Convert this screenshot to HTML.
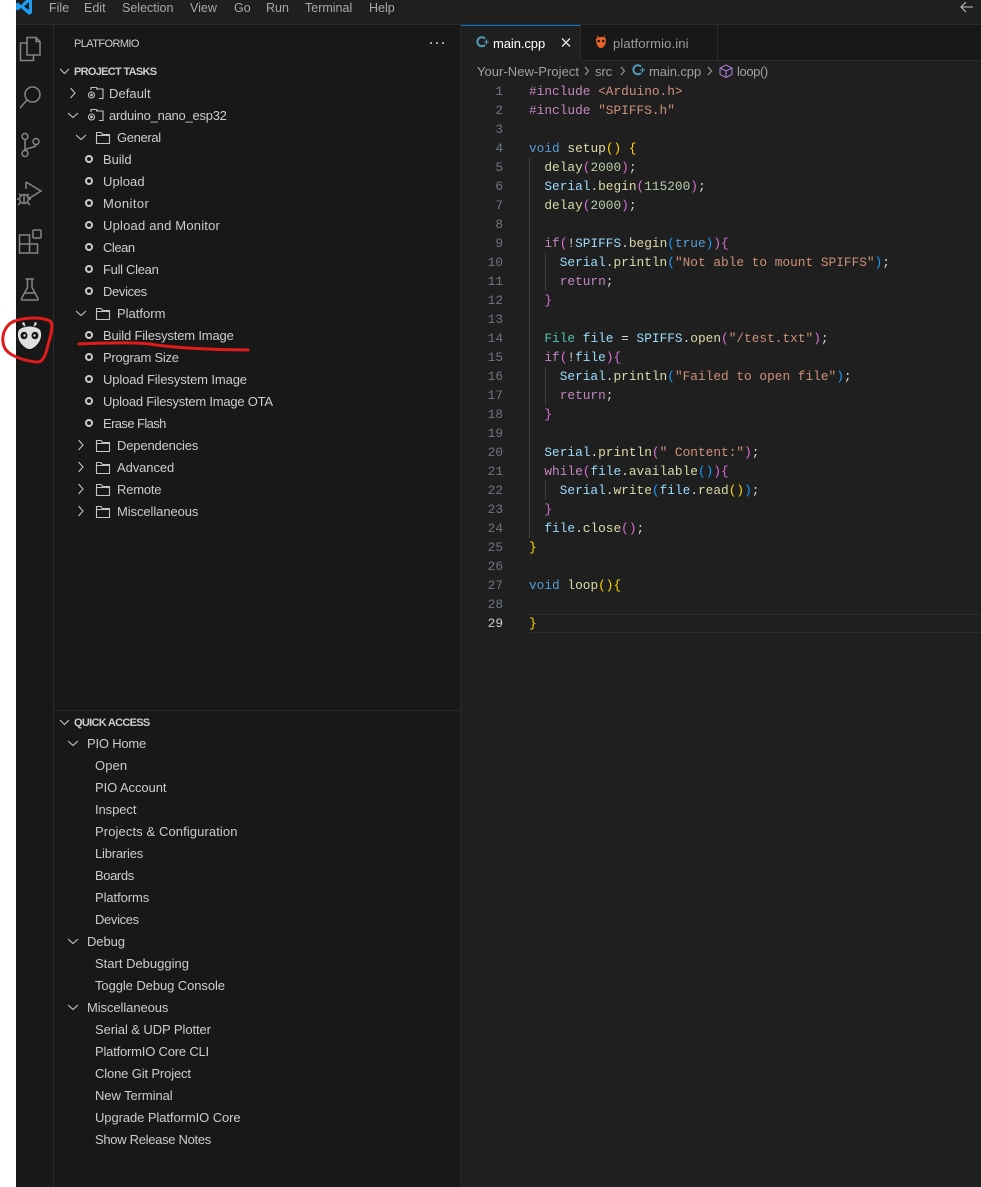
<!DOCTYPE html>
<html><head><meta charset="utf-8">
<style>
html,body{margin:0;padding:0;background:#fff}
#p{position:relative;width:981px;height:1187px;overflow:hidden;background:#fff;font-family:"Liberation Sans",sans-serif}
#p div{position:absolute}
.t{font-size:13px;line-height:22px;height:22px;color:#cccccc;white-space:pre;letter-spacing:-.08px;margin-top:1px}
.m{font-size:12.500px;line-height:16px;color:#a8a8a8;white-space:pre;top:0}
.b{font-size:11px;font-weight:bold;line-height:16px;color:#cccccc;white-space:pre;letter-spacing:-.7px;margin-top:1px}
.c{font-family:"Liberation Mono",monospace;font-size:12.8px;line-height:19px;height:19px;white-space:pre;left:529px;color:#d4d4d4}
.n{font-family:"Liberation Mono",monospace;font-size:12.8px;line-height:19px;height:19px;left:470px;width:33px;text-align:right;color:#6e7681}
.o{width:4px;height:4px;border:2px solid #cccccc;border-radius:50%;left:85px;box-sizing:content-box}
.g{width:1px;background:#404040}
i{font-style:normal}
.k{color:#c586c0}.s{color:#ce9178}.v{color:#569cd6}.f{color:#dcdcaa}.y{color:#ffd700}.q{color:#da70d6}.u{color:#179fff}.w{color:#9cdcfe}.e{color:#b5cea8}.l{color:#4ec9b0}
svg{position:absolute;overflow:visible}
</style></head><body><div id="p">

<div style="left:16px;top:0;width:965px;height:1187px;background:#181818"></div>
<div style="left:16px;top:0;width:965px;height:25px;background:#1f1f1f"></div>
<div style="left:16px;top:24px;width:965px;height:1px;background:#2b2b2b"></div>
<div style="left:53px;top:25px;width:1px;height:1162px;background:#2b2b2b"></div>
<div style="left:460px;top:25px;width:1px;height:1162px;background:#2b2b2b"></div>
<div style="left:461px;top:25px;width:520px;height:1162px;background:#1f1f1f"></div>
<div style="left:461px;top:25px;width:520px;height:36px;background:#181818"></div>

<svg style="left:0;top:0" width="981" height="25" viewBox="0 0 981 25">
<path d="M29 -3L32 -1V13L29 15L21 8L18 10.5L16 9.5V3.5L18 2.5L21 5Z" fill="#1f9cf0"/>
<path d="M29 2L24 6.500L29 10Z" fill="#1f1f1f"/>
<path d="M973 7H961M966 2L961 7L966 12" fill="none" stroke="#c0c0c0" stroke-width="1.100"/>
</svg>
<div class="m" style="left:49px">File</div>
<div class="m" style="left:84px">Edit</div>
<div class="m" style="left:122px">Selection</div>
<div class="m" style="left:190px">View</div>
<div class="m" style="left:234px">Go</div>
<div class="m" style="left:266px">Run</div>
<div class="m" style="left:305px">Terminal</div>
<div class="m" style="left:369px">Help</div>

<svg style="left:16px;top:25px" width="38" height="340" viewBox="16 25 38 340" fill="none" stroke="#858585" stroke-width="1.500">
<path d="M27 37.500H36L40 41.500V55H27ZM36 37.500V41.500H40"/>
<path d="M27 43H20.500V60.500H33.500V55"/>
<circle cx="32.500" cy="94.500" r="7.500"/><path d="M27 100L20 108"/>
<circle cx="25" cy="136.500" r="3"/><circle cx="25" cy="153.500" r="3"/><circle cx="36" cy="141.500" r="3"/>
<path d="M25 139.500V150.500M36 144.500C36 148 29 147 25.500 150"/>
<path d="M26 182V189M26 182L41 191L28 199"/>
<circle cx="24" cy="199" r="4.500"/><path d="M19 194L22 196M29 194L26 196M17 199H20M28 199H31M18 205L21 202M30 205L27 202M24 195V204"/>
<path d="M19.500 235H29.500V253H19.500ZM19.500 244H37.500V253H29.500"/>
<rect x="33" y="230" width="8" height="8" rx="1"/>
<path d="M25.500 279H34M27.500 279V287.500L21.500 298.500C21 299.500 21.500 300 22.500 300H37C38 300 38.500 299.500 38 298.500L32 287.500V279M24 293H35"/>
</svg>
<svg style="left:16px;top:320px" width="30" height="40" viewBox="16 320 30 40">
<path d="M19 330C21.500 327.500 26 326.500 29.500 326.500C33 326.500 37.500 327.500 40 330C41.500 333 41.500 337 39.500 341C37.500 345 33 349 29.500 349C26 349 21.500 345 19.500 341C17.500 337 17.500 333 19 330Z" fill="#e0e0e0"/>
<path d="M25 326L23.500 324M34 326L35.500 324" stroke="#e0e0e0" stroke-width="1.500"/>
<circle cx="23.500" cy="323.500" r="1.300" fill="#e0e0e0"/><circle cx="35.500" cy="323.500" r="1.300" fill="#e0e0e0"/>
<ellipse cx="24" cy="335.500" rx="3.500" ry="3.800" fill="#181818"/><ellipse cx="35" cy="335.500" rx="3.500" ry="3.800" fill="#181818"/>
<circle cx="24.500" cy="335.500" r="1.200" fill="#e0e0e0"/><circle cx="34.500" cy="335.500" r="1.200" fill="#e0e0e0"/>
</svg>

<div class="t" style="left:74px;top:32px;font-size:11px;color:#cccccc;letter-spacing:-.58px">PLATFORMIO</div>
<svg style="left:428px;top:40px" width="18" height="6"><circle cx="3" cy="3" r="1" fill="#ccc"/><circle cx="9" cy="3" r="1" fill="#ccc"/><circle cx="15" cy="3" r="1" fill="#ccc"/></svg>

<svg style="left:54px;top:60px" width="160" height="470" viewBox="54 60 160 470" fill="none" stroke="#c5c5c5" stroke-width="1.100">
<path d="M60 69L64.500 73.500L69 69"/>
<path d="M70.500 88L75 93L70.500 98"/>
<path d="M68 113L73 117.500L78 113"/>
<path d="M76 135L81 139.500L86 135"/>
<path d="M76 311L81 315.500L86 311"/>
<path d="M78.500 440L83 445L78.500 450"/><path d="M78.500 462L83 467L78.500 472"/><path d="M78.500 484L83 489L78.500 494"/><path d="M78.500 506L83 511L78.500 516"/>
<path d="M91 90V87.500H96.500L98 89H103V98.500H99M103 89H96"/><circle cx="91.500" cy="95" r="3"/><circle cx="91.500" cy="95" r=".8" fill="#c5c5c5"/>
<path d="M91 112V109.500H96.500L98 111H103V120.500H99M103 111H96"/><circle cx="91.500" cy="117" r="3"/><circle cx="91.500" cy="117" r=".8" fill="#c5c5c5"/>
<path d="M96.500 132.500H101L102.500 134.500H109.500V143.500H96.500ZM96.500 135.500H109.500"/>
<path d="M96.500 308.500H101L102.500 310.500H109.500V319.500H96.500ZM96.500 311.500H109.500"/>
<path d="M96.500 440.500H101L102.500 442.500H109.500V451.500H96.500ZM96.500 443.500H109.500"/>
<path d="M96.500 462.500H101L102.500 464.500H109.500V473.500H96.500ZM96.500 465.500H109.500"/>
<path d="M96.500 484.500H101L102.500 486.500H109.500V495.500H96.500ZM96.500 487.500H109.500"/>
<path d="M96.500 506.500H101L102.500 508.500H109.500V517.500H96.500ZM96.500 509.500H109.500"/>
</svg>

<div class="b" style="left:74px;top:63px">PROJECT TASKS</div>
<div class="t" style="left:109px;top:82px;letter-spacing:.06px">Default</div>
<div class="t" style="left:109px;top:104px;letter-spacing:-.25px">arduino_nano_esp32</div>
<div class="t" style="left:117px;top:126px;letter-spacing:-.36px">General</div>
<div class="o" style="top:155px"></div><div class="t" style="left:103px;top:148px">Build</div>
<div class="o" style="top:177px"></div><div class="t" style="left:103px;top:170px;letter-spacing:.08px">Upload</div>
<div class="o" style="top:199px"></div><div class="t" style="left:103px;top:192px;letter-spacing:.42px">Monitor</div>
<div class="o" style="top:221px"></div><div class="t" style="left:103px;top:214px;letter-spacing:.2px">Upload and Monitor</div>
<div class="o" style="top:243px"></div><div class="t" style="left:103px;top:236px;letter-spacing:-.48px">Clean</div>
<div class="o" style="top:265px"></div><div class="t" style="left:103px;top:258px;letter-spacing:-.3px">Full Clean</div>
<div class="o" style="top:287px"></div><div class="t" style="left:103px;top:280px;letter-spacing:-.35px">Devices</div>
<div class="t" style="left:117px;top:302px;letter-spacing:0">Platform</div>
<div class="o" style="top:331px"></div><div class="t" style="left:103px;top:324px;letter-spacing:-.17px">Build Filesystem Image</div>
<div class="o" style="top:353px"></div><div class="t" style="left:103px;top:346px;letter-spacing:-.25px">Program Size</div>
<div class="o" style="top:375px"></div><div class="t" style="left:103px;top:368px;letter-spacing:-.12px">Upload Filesystem Image</div>
<div class="o" style="top:397px"></div><div class="t" style="left:103px;top:390px;letter-spacing:-.23px">Upload Filesystem Image OTA</div>
<div class="o" style="top:419px"></div><div class="t" style="left:103px;top:412px;letter-spacing:-.6px">Erase Flash</div>
<div class="t" style="left:117px;top:434px;letter-spacing:-.16px">Dependencies</div>
<div class="t" style="left:117px;top:456px">Advanced</div>
<div class="t" style="left:117px;top:478px;letter-spacing:-.2px">Remote</div>
<div class="t" style="left:117px;top:500px">Miscellaneous</div>

<div style="left:54px;top:710px;width:406px;height:1px;background:#2b2b2b"></div>
<svg style="left:54px;top:710px" width="40" height="310" viewBox="54 710 40 310" fill="none" stroke="#c5c5c5" stroke-width="1.100">
<path d="M60 720L64.500 724.500L69 720"/>
<path d="M68 741L73 745.500L78 741"/>
<path d="M68 939L73 943.500L78 939"/>
<path d="M68 1005L73 1009.500L78 1005"/>
</svg>
<div class="b" style="left:74px;top:714px">QUICK ACCESS</div>
<div class="t" style="left:87px;top:732px;letter-spacing:-.2px">PIO Home</div>
<div class="t" style="left:95px;top:754px;letter-spacing:.1px">Open</div>
<div class="t" style="left:95px;top:776px">PIO Account</div>
<div class="t" style="left:95px;top:798px">Inspect</div>
<div class="t" style="left:95px;top:820px;letter-spacing:.1px">Projects &amp; Configuration</div>
<div class="t" style="left:95px;top:842px;letter-spacing:-.2px">Libraries</div>
<div class="t" style="left:95px;top:864px;letter-spacing:-.4px">Boards</div>
<div class="t" style="left:95px;top:886px">Platforms</div>
<div class="t" style="left:95px;top:908px;letter-spacing:-.35px">Devices</div>
<div class="t" style="left:87px;top:930px">Debug</div>
<div class="t" style="left:95px;top:952px;letter-spacing:0">Start Debugging</div>
<div class="t" style="left:95px;top:974px">Toggle Debug Console</div>
<div class="t" style="left:87px;top:996px">Miscellaneous</div>
<div class="t" style="left:95px;top:1018px">Serial &amp; UDP Plotter</div>
<div class="t" style="left:95px;top:1040px;letter-spacing:-.2px">PlatformIO Core CLI</div>
<div class="t" style="left:95px;top:1062px;letter-spacing:-.14px">Clone Git Project</div>
<div class="t" style="left:95px;top:1084px">New Terminal</div>
<div class="t" style="left:95px;top:1106px">Upgrade PlatformIO Core</div>
<div class="t" style="left:95px;top:1128px;letter-spacing:-.3px">Show Release Notes</div>

<div style="left:461px;top:25px;width:119px;height:36px;background:#1f1f1f"></div>
<div style="left:461px;top:25px;width:119px;height:1px;background:#0078d4"></div>
<div style="left:580px;top:25px;width:1px;height:36px;background:#2b2b2b"></div>
<div style="left:717px;top:25px;width:1px;height:36px;background:#2b2b2b"></div>
<div style="left:718px;top:60px;width:263px;height:1px;background:#2b2b2b"></div>
<div style="left:581px;top:60px;width:137px;height:1px;background:#2b2b2b"></div>
<div class="t" style="left:493px;top:32px;color:#ffffff">main.cpp</div>
<div class="t" style="left:613px;top:32px;color:#9d9d9d;letter-spacing:.14px">platformio.ini</div>
<svg style="left:461px;top:25px" width="260" height="60" viewBox="461 25 260 60" fill="none">
<path d="M562 38.500L570 46.500M570 38.500L562 46.500" stroke="#e8e8e8" stroke-width="1.300"/>
<path d="M485 38.500A4.500 4.500 0 1 0 485 45" stroke="#519aba" stroke-width="2"/>
<path d="M484 42H489M486.500 39.500V44.500" stroke="#519aba" stroke-width="1.100"/>
<path d="M641 66.500A4.500 4.500 0 1 0 641 73" stroke="#519aba" stroke-width="2"/>
<path d="M640 70H645M642.500 67.500V72.500" stroke="#519aba" stroke-width="1.100"/>
<path d="M596 40C596 37.500 598 37 601 37C604 37 606 37.500 606 40C606 44 604 48 601 48C598 48 596 44 596 40Z" fill="#e8622c"/>
<path d="M598 37L597 35.500M604 37L605 35.500" stroke="#e8622c"/>
<circle cx="598.700" cy="41" r="1.300" fill="#181818"/><circle cx="603.300" cy="41" r="1.300" fill="#181818"/>
</svg>
<svg style="left:461px;top:61px" width="320" height="20" viewBox="461 61 320 20" fill="none" stroke="#a0a0a0" stroke-width="1">
<path d="M585 67L588.500 71L585 75M621 67L624.500 71L621 75M708 67L711.500 71L708 75"/>
<path d="M726 65L732 68V74.500L726 77.500L720 74.500V68ZM720 68L726 71L732 68M726 71V77.500" stroke="#b180d7"/>
</svg>
<div class="t" style="left:477px;top:60px;color:#a0a0a0;letter-spacing:.04px">Your-New-Project</div>
<div class="t" style="left:595px;top:60px;color:#a0a0a0">src</div>
<div class="t" style="left:649px;top:60px;color:#a0a0a0">main.cpp</div>
<div class="t" style="left:737px;top:60px;color:#a0a0a0;letter-spacing:-.4px">loop()</div>

<div class="g" style="left:529px;top:158px;height:380px"></div>
<div class="g" style="left:545px;top:253px;height:38px"></div>
<div class="g" style="left:545px;top:367px;height:38px"></div>
<div class="g" style="left:545px;top:481px;height:19px"></div>
<div style="left:529px;top:614px;width:452px;height:17px;border-top:1px solid #2b2b2b;border-bottom:1px solid #2b2b2b;background:#1f1f1f"></div>

<div class="n" style="top:82px">1</div>
<div class="n" style="top:101px">2</div>
<div class="n" style="top:120px">3</div>
<div class="n" style="top:139px">4</div>
<div class="n" style="top:158px">5</div>
<div class="n" style="top:177px">6</div>
<div class="n" style="top:196px">7</div>
<div class="n" style="top:215px">8</div>
<div class="n" style="top:234px">9</div>
<div class="n" style="top:253px">10</div>
<div class="n" style="top:272px">11</div>
<div class="n" style="top:291px">12</div>
<div class="n" style="top:310px">13</div>
<div class="n" style="top:329px">14</div>
<div class="n" style="top:348px">15</div>
<div class="n" style="top:367px">16</div>
<div class="n" style="top:386px">17</div>
<div class="n" style="top:405px">18</div>
<div class="n" style="top:424px">19</div>
<div class="n" style="top:443px">20</div>
<div class="n" style="top:462px">21</div>
<div class="n" style="top:481px">22</div>
<div class="n" style="top:500px">23</div>
<div class="n" style="top:519px">24</div>
<div class="n" style="top:538px">25</div>
<div class="n" style="top:557px">26</div>
<div class="n" style="top:576px">27</div>
<div class="n" style="top:595px">28</div>
<div class="n" style="top:614px;color:#cccccc">29</div>

<div class="c" style="top:82px"><i class="k">#include </i><i class="s">&lt;Arduino.h&gt;</i></div>
<div class="c" style="top:101px"><i class="k">#include </i><i class="s">"SPIFFS.h"</i></div>
<div class="c" style="top:139px"><i class="v">void</i> <i class="f">setup</i><i class="y">()</i> <i class="y">{</i></div>
<div class="c" style="top:158px">  <i class="f">delay</i><i class="q">(</i><i class="e">2000</i><i class="q">)</i>;</div>
<div class="c" style="top:177px">  <i class="w">Serial</i>.<i class="f">begin</i><i class="q">(</i><i class="e">115200</i><i class="q">)</i>;</div>
<div class="c" style="top:196px">  <i class="f">delay</i><i class="q">(</i><i class="e">2000</i><i class="q">)</i>;</div>
<div class="c" style="top:234px">  <i class="k">if</i><i class="q">(</i>!<i class="w">SPIFFS</i>.<i class="f">begin</i><i class="u">(</i><i class="v">true</i><i class="u">)</i><i class="q">){</i></div>
<div class="c" style="top:253px">    <i class="w">Serial</i>.<i class="f">println</i><i class="u">(</i><i class="s">"Not able to mount SPIFFS"</i><i class="u">)</i>;</div>
<div class="c" style="top:272px">    <i class="k">return</i>;</div>
<div class="c" style="top:291px">  <i class="q">}</i></div>
<div class="c" style="top:329px">  <i class="l">File</i> <i class="w">file</i> = <i class="w">SPIFFS</i>.<i class="f">open</i><i class="q">(</i><i class="s">"/test.txt"</i><i class="q">)</i>;</div>
<div class="c" style="top:348px">  <i class="k">if</i><i class="q">(</i>!<i class="w">file</i><i class="q">){</i></div>
<div class="c" style="top:367px">    <i class="w">Serial</i>.<i class="f">println</i><i class="u">(</i><i class="s">"Failed to open file"</i><i class="u">)</i>;</div>
<div class="c" style="top:386px">    <i class="k">return</i>;</div>
<div class="c" style="top:405px">  <i class="q">}</i></div>
<div class="c" style="top:443px">  <i class="w">Serial</i>.<i class="f">println</i><i class="q">(</i><i class="s">" Content:"</i><i class="q">)</i>;</div>
<div class="c" style="top:462px">  <i class="k">while</i><i class="q">(</i><i class="w">file</i>.<i class="f">available</i><i class="u">()</i><i class="q">){</i></div>
<div class="c" style="top:481px">    <i class="w">Serial</i>.<i class="f">write</i><i class="u">(</i><i class="w">file</i>.<i class="f">read</i><i class="y">()</i><i class="u">)</i>;</div>
<div class="c" style="top:500px">  <i class="q">}</i></div>
<div class="c" style="top:519px">  <i class="w">file</i>.<i class="f">close</i><i class="q">()</i>;</div>
<div class="c" style="top:538px"><i class="y">}</i></div>
<div class="c" style="top:576px"><i class="v">void</i> <i class="f">loop</i><i class="y">(){</i></div>
<div class="c" style="top:614px"><i class="y">}</i></div>

<svg style="left:0;top:310px" width="260" height="60" viewBox="0 310 260 60" fill="none" stroke="#e01b1b" stroke-width="3" stroke-linecap="round">
<path d="M13 322C20 318 40 316 50 321C54 324 51 335 48 345C46 354 43 362 38 362C30 362 15 358 8 352C2 347 2 338 4 332C6 327 10 323 14 321"/>
<path d="M79 344C100 343 130 342 150 344C175 348 215 350 248 350"/>
</svg>
</div></body></html>
